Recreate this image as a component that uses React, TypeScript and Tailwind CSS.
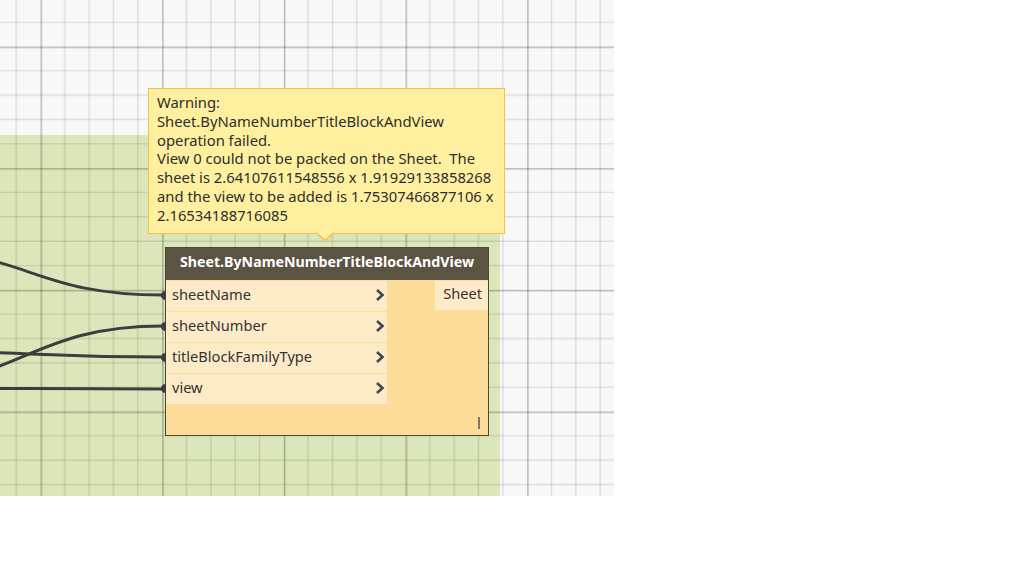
const inputs = ['sheetName', 'sheetNumber', 'titleBlockFamilyType', 'view'];

const font = { fontFamily: '"Noto Sans", "Open Sans", sans-serif' };

function Grid() {
  return (
    <svg className="absolute inset-0" width="614" height="496">
      <defs>
        <pattern id="grid" patternUnits="userSpaceOnUse" x="40.5" y="46.5" width="121.667" height="121.667">
          {[24.333, 48.667, 73, 97.333].map(p => (
            <g key={p}>
              <line x1={p} y1="0" x2={p} y2="121.667" stroke="rgba(0,0,0,0.11)" strokeWidth="1.4" />
              <line x1="0" y1={p} x2="121.667" y2={p} stroke="rgba(0,0,0,0.11)" strokeWidth="1.4" />
            </g>
          ))}
          <line x1="0" y1="0" x2="0" y2="121.667" stroke="rgba(0,0,0,0.26)" strokeWidth="3" />
          <line x1="0" y1="0" x2="121.667" y2="0" stroke="rgba(0,0,0,0.26)" strokeWidth="3" />
        </pattern>
      </defs>
      <rect width="614" height="496" fill="url(#grid)" />
    </svg>
  );
}

function Wires() {
  return (
    <svg className="absolute inset-0" width="614" height="496" fill="none" stroke="#3d3d3d" strokeWidth="3">
      <path d="M-100 250 C30 250, 30 295, 163 295" />
      <path d="M-100 384 C20 384, 30 326, 163 326" />
      <path d="M-100 351 C30 351, 30 357, 163 357" />
      <path d="M-100 388 C30 388, 30 389, 163 389" />
    </svg>
  );
}

function Chevron() {
  return (
    <svg width="10" height="14" viewBox="0 0 10 14">
      <path d="M2 2 L7.5 7 L2 12" stroke="#3e4650" strokeWidth="2.6" fill="none" />
    </svg>
  );
}

function Node() {
  return (
    <div className="absolute left-[165px] top-[247px] w-[324px] h-[189px] border border-[#4f4838] bg-[#fddb98] flex flex-col" style={font}>
      <div className="h-[32px] bg-[#5c5443] text-white font-bold text-[14.2px] flex items-center justify-center pb-[4px]">
        Sheet.ByNameNumberTitleBlockAndView
      </div>
      <div className="flex flex-1">
        <div className="w-[221px] flex flex-col gap-[1px] pt-[1px]">
          {inputs.map(name => (
            <div key={name} className="relative h-[30px] bg-[#fdebc8] flex items-center justify-between pl-[6px] pr-[2px] pb-[3px] text-[14.6px] text-[#333]">
              <span>{name}</span>
              <Chevron />
              <span className="absolute left-[-5px] top-[10px] w-[5px] h-[9px] rounded-l-full bg-[#3d3d3d]" />
            </div>
          ))}
        </div>
        <div className="flex-1 flex flex-col items-end pt-[1px]">
          <div className="h-[29px] w-[53px] bg-[#fdebc8] flex items-center justify-end pr-[6px] pb-[3px] text-[14.6px] text-[#333]">Sheet</div>
          <div className="flex-1" />
          <div className="w-[2px] h-[12px] bg-[#777] mr-[8px] mb-[6px]" />
        </div>
      </div>
    </div>
  );
}

function Tooltip() {
  return (
    <div className="absolute left-[148px] top-[88px] w-[357px] h-[146px]" style={font}>
      <div className="w-full h-full border-[1.5px] border-[#f3c04c] bg-[#fff0a0] pl-[8px] pt-[4px] text-[14.8px] leading-[18.8px] text-[#2e2e2e]">
        <div>Warning:</div>
        <div>Sheet.ByNameNumberTitleBlockAndView</div>
        <div>operation failed.</div>
        <div>View 0 could not be packed on the Sheet.&nbsp; The</div>
        <div>sheet is 2.64107611548556 x 1.91929133858268</div>
        <div>and the view to be added is 1.75307466877106 x</div>
        <div>2.16534188716085</div>
      </div>
      <svg className="absolute left-[168px] top-[144px]" width="18" height="10" viewBox="0 0 18 10">
        <path d="M0 0.5 L9 8.5 L18 0.5" fill="#fff0a0" stroke="#f3c04c" strokeWidth="1.5" />
        <rect x="1" y="0" width="16" height="1.2" fill="#fff0a0" />
      </svg>
    </div>
  );
}

export default function App() {
  return (
    <div className="w-[1024px] h-[576px] bg-white">
      <div className="relative w-[614px] h-[496px] bg-[#f8f8f8] overflow-hidden">
        <div className="absolute left-0 top-[135px] w-[500px] h-[361px] bg-[#dbe6ba]" />
        <Grid />
        <Wires />
        <Node />
        <Tooltip />
      </div>
    </div>
  );
}
